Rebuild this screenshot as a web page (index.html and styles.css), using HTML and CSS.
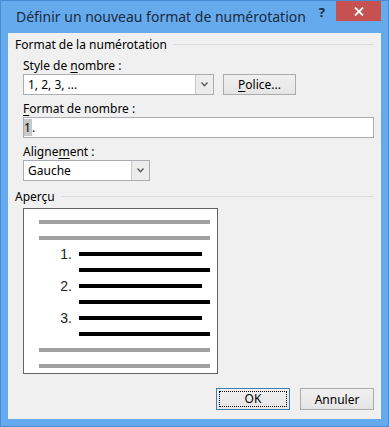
FILE: index.html
```html
<!DOCTYPE html>
<html lang="fr">
<head>
    <meta charset="UTF-8">
    <title>Définir un nouveau format de numérotation</title>
    <link rel="stylesheet" href="styles.css">
</head>
<body>
    <div class="window">
        <div class="titlebar">
            <span class="title">Définir un nouveau format de numérotation</span>
            <span class="help">?</span>
            <span class="close">
                <svg width="10" height="9" viewBox="0 0 10 9"><path d="M1 0.5 L9 8.5 M9 0.5 L1 8.5" stroke="#fff" stroke-width="1.8"/></svg>
            </span>
        </div>

        <div class="client">
            <div class="group-title"><span>Format de la numérotation</span></div>

            <div class="group-body">
                <div class="label">Style de <u>n</u>ombre :</div>
                <div class="row">
                    <div class="combo">
                        <span class="combo-text">1, 2, 3, ...</span>
                        <span class="combo-btn">
                            <svg width="7" height="5" viewBox="0 0 7 5"><path d="M0.5 0.5 L3.5 3.8 L6.5 0.5" fill="none" stroke="#555" stroke-width="1.3"/></svg>
                        </span>
                    </div>
                    <button class="btn police"><u>P</u>olice...</button>
                </div>

                <div class="label"><u>F</u>ormat de nombre :</div>
                <div class="textbox"><span class="sel">1</span>.</div>

                <div class="label">Aligne<u>m</u>ent :</div>
                <div class="combo small">
                    <span class="combo-text">Gauche</span>
                    <span class="combo-btn">
                        <svg width="7" height="5" viewBox="0 0 7 5"><path d="M0.5 0.5 L3.5 3.8 L6.5 0.5" fill="none" stroke="#555" stroke-width="1.3"/></svg>
                    </span>
                </div>
            </div>

            <div class="group-title preview-title"><span>Aperçu</span></div>

            <div class="preview">
                <div class="bar gray"></div>
                <div class="bar gray"></div>
                <div class="item"><span class="num">1.</span><div class="bar black short"></div></div>
                <div class="item"><span class="num"></span><div class="bar black"></div></div>
                <div class="item"><span class="num">2.</span><div class="bar black short"></div></div>
                <div class="item"><span class="num"></span><div class="bar black"></div></div>
                <div class="item"><span class="num">3.</span><div class="bar black short"></div></div>
                <div class="item"><span class="num"></span><div class="bar black"></div></div>
                <div class="bar gray"></div>
                <div class="bar gray"></div>
            </div>

            <div class="actions">
                <button class="btn default"><span class="focus">OK</span></button>
                <button class="btn">Annuler</button>
            </div>
        </div>
    </div>
</body>
</html>
```

FILE: styles.css
```css
* {
    margin: 0;
    padding: 0;
    box-sizing: border-box;
}

body {
    font-family: 'Noto Sans', 'Open Sans', sans-serif;
    font-size: 12px;
    color: #000;
    background: #fff;
}

u {
    text-decoration: underline;
    text-underline-offset: 2px;
}

.window {
    width: 389px;
    height: 427px;
    background: #66aaee;
    border: 1px solid #4a8bd6;
    padding: 0 7px 7px 7px;
    display: flex;
    flex-direction: column;
}

.titlebar {
    height: 32px;
    display: flex;
    align-items: flex-start;
}

.title {
    font-size: 14px;
    line-height: 20px;
    color: #1a2b3c;
    margin: 6px 0 0 8px;
    flex: 1;
    white-space: nowrap;
}

.help {
    font-weight: bold;
    font-size: 13px;
    color: #1a2b3c;
    margin: 2px 11px 0 0;
}

.close {
    width: 45px;
    height: 20px;
    background: #c75050;
    display: flex;
    align-items: center;
    justify-content: center;
}

.client {
    flex: 1;
    background: #f0f0f0;
    padding: 4px 7px 0 7px;
}

.group-title {
    display: flex;
    align-items: center;
    line-height: 15px;
    gap: 6px;
}

.group-title::after {
    content: '';
    flex: 1;
    height: 1px;
    background: #dcdcdc;
    margin-right: 1px;
}

.group-body {
    padding-left: 8px;
}

.label {
    line-height: 15px;
    margin-top: 6px;
    margin-bottom: 1px;
}

.row {
    display: flex;
    align-items: center;
    gap: 9px;
}

.combo {
    width: 191px;
    height: 21px;
    background: #fff;
    border: 1px solid #abadb3;
    display: flex;
    align-items: stretch;
}

.combo.small {
    width: 127px;
}

.combo-text {
    flex: 1;
    padding-left: 4px;
    line-height: 19px;
}

.combo-btn {
    width: 18px;
    background: #ececec;
    border-left: 1px solid #c8c8c8;
    display: flex;
    align-items: center;
    justify-content: center;
}

.btn {
    font-family: inherit;
    font-size: 12px;
    height: 22px;
    width: 74px;
    border: 1px solid #acacac;
    background: linear-gradient(#f0f0f0, #e5e5e5);
    color: #000;
}

.police {
    width: 73px;
    height: 21px;
}

.textbox {
    width: 351px;
    height: 21px;
    background: #fff;
    border: 1px solid #abadb3;
    line-height: 19px;
}

.sel {
    background: #c8c8c8;
    display: inline-block;
    height: 17px;
    line-height: 17px;
    margin-top: 1px;
    vertical-align: top;
    padding-right: 1px;
}

.preview-title {
    margin-top: 8px;
}

.preview {
    width: 195px;
    height: 166px;
    margin: 4px 0 0 8px;
    background: #fff;
    border: 1px solid #646464;
    padding: 11px 7px 0 15px;
    display: flex;
    flex-direction: column;
    gap: 12px;
}

.bar {
    height: 4px;
    flex-shrink: 0;
}

.bar.gray {
    background: #a0a0a0;
}

.bar.black {
    background: #000;
    flex: 1;
}

.bar.black.short {
    margin-right: 8px;
}

.item {
    display: flex;
    align-items: center;
    height: 4px;
}

.num {
    width: 40px;
    padding-right: 7px;
    text-align: right;
    font-family: 'Liberation Sans', Arial, sans-serif;
    font-size: 14px;
    color: #222;
}

.actions {
    display: flex;
    justify-content: flex-end;
    gap: 10px;
    margin-top: 14px;
}

.default {
    border-color: #3c7fb1;
    padding: 2px;
}

.focus {
    display: block;
    height: 100%;
    border: 1px dotted #000;
    line-height: 14px;
}
```
